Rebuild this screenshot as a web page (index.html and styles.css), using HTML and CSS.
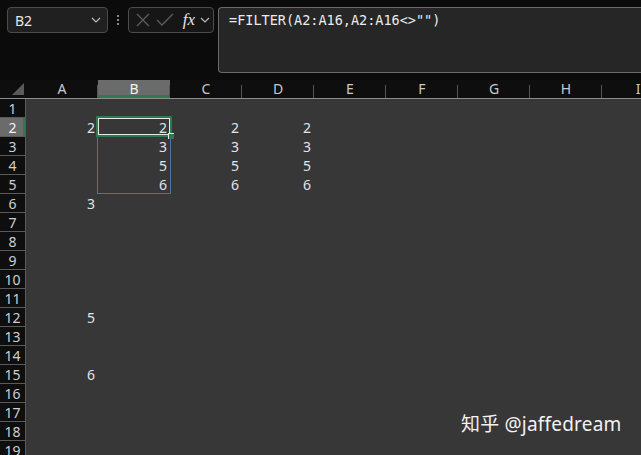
FILE: index.html
```html
<!DOCTYPE html>
<html>
<head>
  <title>Sheet</title>
  <link rel="stylesheet" href="styles.css">
</head>
<body>

  <!-- formula bar -->
  <div class="topbar">
    <div class="namebox">
      <span class="ref">B2</span>
      <svg class="chev" width="10" height="6" viewBox="0 0 10 6"><polyline points="1,1 5,5 9,1" fill="none" stroke="#bbb" stroke-width="1.2"/></svg>
    </div>
    <div class="dots"><i></i><i></i><i></i></div>
    <div class="fxbox">
      <svg width="16" height="16" viewBox="0 0 16 16"><path d="M2 2 L14 14 M14 2 L2 14" stroke="#5c5c5c" stroke-width="1.3"/></svg>
      <svg width="18" height="16" viewBox="0 0 18 16"><polyline points="1,8 6,13 17,2" fill="none" stroke="#5c5c5c" stroke-width="1.3"/></svg>
      <span class="fx">fx</span>
      <svg class="chev" width="10" height="6" viewBox="0 0 10 6"><polyline points="1,1 5,5 9,1" fill="none" stroke="#bbb" stroke-width="1.2"/></svg>
    </div>
    <div class="formula">=FILTER(A2:A16,A2:A16&lt;&gt;"")</div>
  </div>

  <!-- column headers -->
  <div class="colhead">
    <div class="corner"><svg width="12" height="12" viewBox="0 0 12 12"><polygon points="12,0 12,12 0,12" fill="#5a5a5a"/></svg></div>
    <div class="ch">A</div>
    <div class="ch on">B</div>
    <div class="ch">C</div>
    <div class="ch">D</div>
    <div class="ch">E</div>
    <div class="ch">F</div>
    <div class="ch">G</div>
    <div class="ch">H</div>
    <div class="ch">I</div>
  </div>

  <!-- cells -->
  <div class="sheet">
    <div class="row"><div class="rh">1</div></div>
    <div class="row"><div class="rh on">2</div><div class="c">2</div><div class="c">2</div><div class="c">2</div><div class="c">2</div></div>
    <div class="row"><div class="rh">3</div><div class="c"></div><div class="c">3</div><div class="c">3</div><div class="c">3</div></div>
    <div class="row"><div class="rh">4</div><div class="c"></div><div class="c">5</div><div class="c">5</div><div class="c">5</div></div>
    <div class="row"><div class="rh">5</div><div class="c"></div><div class="c">6</div><div class="c">6</div><div class="c">6</div></div>
    <div class="row"><div class="rh">6</div><div class="c">3</div></div>
    <div class="row"><div class="rh">7</div></div>
    <div class="row"><div class="rh">8</div></div>
    <div class="row"><div class="rh">9</div></div>
    <div class="row"><div class="rh">10</div></div>
    <div class="row"><div class="rh">11</div></div>
    <div class="row"><div class="rh">12</div><div class="c">5</div></div>
    <div class="row"><div class="rh">13</div></div>
    <div class="row"><div class="rh">14</div></div>
    <div class="row"><div class="rh">15</div><div class="c">6</div></div>
    <div class="row"><div class="rh">16</div></div>
    <div class="row"><div class="rh">17</div></div>
    <div class="row"><div class="rh">18</div></div>
    <div class="row"><div class="rh">19</div></div>

    <!-- selection overlays -->
    <div class="spill"></div>
    <div class="active"></div>
    <div class="handle"></div>

    <div class="mark">知乎 @jaffedream</div>
  </div>

</body>
</html>
```

FILE: styles.css
```css
body      { margin: 0; background: #0b0b0b; font-family: "Noto Sans", "Noto Sans CJK SC", sans-serif; color: #e2e2e2; overflow: hidden; }

/* formula bar */
.topbar   { height: 80px; display: flex; align-items: flex-start; padding: 7px 0 0 7px; box-sizing: border-box; }
.namebox  {
  width: 101px; height: 26px; box-sizing: border-box;
  display: flex; align-items: center; justify-content: space-between;
  padding: 0 6px 0 7px;
  background: #202020; border: 1px solid #4c4c4c; border-radius: 4px;
}
.ref      { font-size: 14px; color: #e6e6e6; }
.dots     { width: 20px; height: 26px; display: flex; flex-direction: column; align-items: center; justify-content: center; gap: 2px; }
.dots i   { width: 2px; height: 2px; background: #8a8a8a; }
.fxbox    {
  width: 86px; height: 26px; box-sizing: border-box;
  display: flex; align-items: center; gap: 5px;
  padding: 0 3px 0 6px;
  background: #161616; border: 1px solid #4c4c4c; border-radius: 4px;
}
.fx       { font-family: "Liberation Serif", serif; font-style: italic; font-size: 17px; color: #e6e6e6; margin-left: 4px; }
.formula  {
  flex: 1; height: 66px; margin-left: 4px; box-sizing: border-box;
  padding: 4px 0 0 10px;
  background: #262626; border: 1px solid #6a6a6a; border-right: none; border-radius: 4px 0 0 4px;
  font-family: "DejaVu Sans Mono", monospace; font-size: 13.5px; color: #ececec;
}

/* headers */
.colhead  { height: 19px; display: flex; overflow: hidden; background: #0e0e0e; border-bottom: 1px solid #8c8c8c; box-sizing: border-box; }
.corner   { width: 26px; flex: none; display: flex; align-items: flex-end; justify-content: flex-end; padding: 0 2px 3px 0; box-sizing: border-box; }
.ch       { width: 72px; flex: none; position: relative; text-align: center; font-size: 14px; line-height: 18px; color: #c9c9c9; }
.ch::after { content: ""; position: absolute; right: 0; top: 5px; bottom: 0; width: 1px; background: #555; }
.ch.on    { background: #6b6b6b; color: #f0f0f0; box-shadow: inset 0 -3px 0 #2c7a52; }

/* grid */
.sheet    { position: relative; background: #373737; height: 376px; overflow: hidden; }
.row      { height: 19px; display: flex; }
.rh       {
  width: 26px; flex: none; box-sizing: border-box;
  background: #0e0e0e; border-bottom: 1px solid #5a5a5a; border-right: 1px solid #5a5a5a;
  text-align: center; font-size: 14px; line-height: 19px; color: #cfcfcf;
}
.rh.on    { background: #6b6b6b; color: #f2f2f2; box-shadow: inset -2px 0 0 #2c7a52; }
.c        { width: 72px; flex: none; box-sizing: border-box; padding-right: 3px; text-align: right; font-size: 14px; line-height: 19px; color: #e4e4e4; }

.spill    { position: absolute; left: 97px; top: 18px; width: 74px; height: 77px; box-sizing: border-box; border: 1px solid #4f70ad; }
.active   { position: absolute; left: 96px; top: 17px; width: 76px; height: 21px; box-sizing: border-box; border: 2px solid #2c7a52; box-shadow: inset 0 0 0 1px #e8e8e8; }
.handle   { position: absolute; left: 168px; top: 34px; width: 5px; height: 5px; background: #2c7a52; border-left: 1px solid #e8e8e8; border-top: 1px solid #e8e8e8; }

.mark     { position: absolute; left: 461px; top: 310px; font-size: 19px; color: #f2f2f2; letter-spacing: 0.2px; }
```
